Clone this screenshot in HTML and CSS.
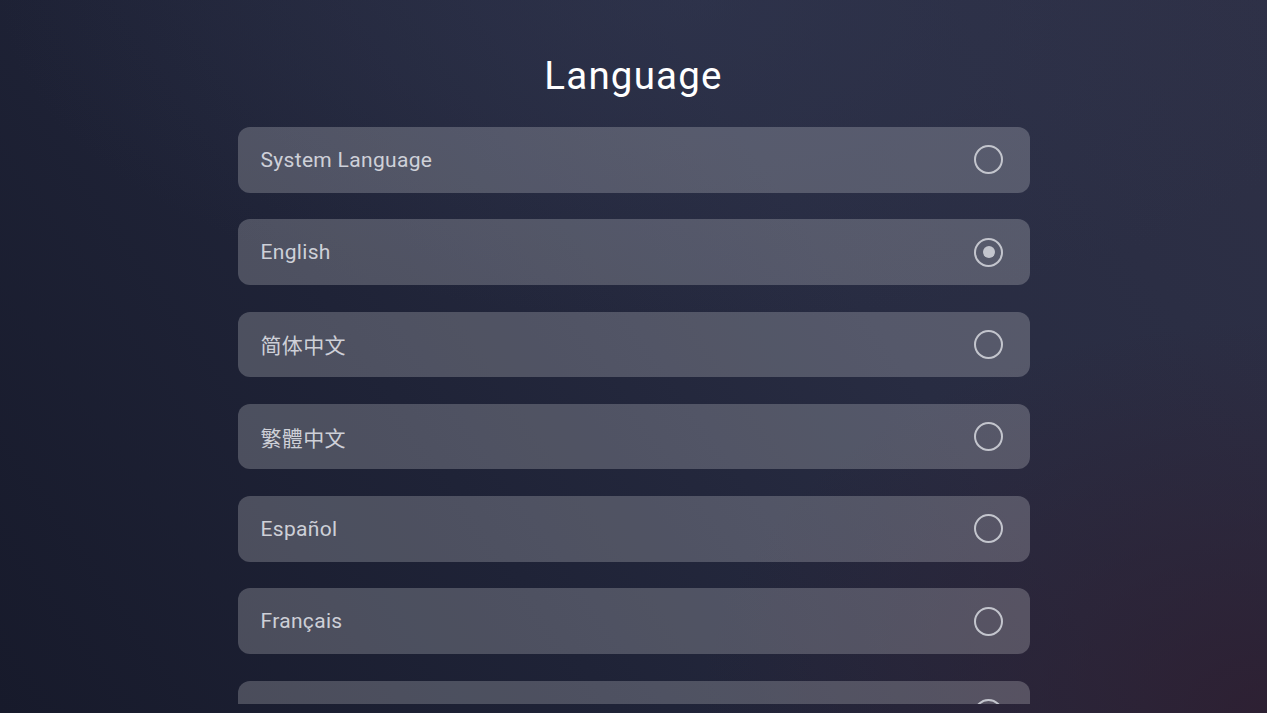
FILE: index.html
```html
<!DOCTYPE html>
<html lang="en">
<head>
<meta charset="utf-8">
<title>Language</title>
<link rel="stylesheet" href="styles.css">
</head>
<body>
<main class="screen">
  <h1 class="title">Language</h1>
  <ul class="lang-list">
    <li class="lang-item"><span class="lang-name">System Language</span><span class="radio"></span></li>
    <li class="lang-item"><span class="lang-name">English</span><span class="radio radio-on"></span></li>
    <li class="lang-item"><span class="lang-name">简体中文</span><span class="radio"></span></li>
    <li class="lang-item"><span class="lang-name">繁體中文</span><span class="radio"></span></li>
    <li class="lang-item"><span class="lang-name">Español</span><span class="radio"></span></li>
    <li class="lang-item"><span class="lang-name">Français</span><span class="radio"></span></li>
    <li class="lang-item"><span class="lang-name">Deutsch</span><span class="radio"></span></li>
    <li class="lang-item"><span class="lang-name">日本語</span><span class="radio"></span></li>
  </ul>
</main>
</body>
</html>
```

FILE: styles.css
```css
html, body {
  margin: 0;
  padding: 0;
  height: 100%;
  overflow: hidden;
}

body {
  font-family: Roboto, "Noto Sans CJK SC", "Noto Sans CJK TC", sans-serif;
  background:
    radial-gradient(ellipse 45% 55% at 100% 100%, rgba(46, 30, 48, 0.85), rgba(46, 30, 48, 0) 100%),
    radial-gradient(ellipse 55% 45% at 55% 0%, rgba(50, 56, 82, 0.5), rgba(50, 56, 82, 0) 100%),
    linear-gradient(55deg, #171a2b 0%, #1f2337 35%, #282c42 65%, #2e3046 100%);
  color: #fff;
}

.screen {
  height: 100%;
  display: flex;
  flex-direction: column;
  align-items: center;
  box-sizing: border-box;
  padding-bottom: 9px;
}

.title {
  margin: 52px 0 0;
  height: 75px;
  font-size: 38.5px;
  font-weight: 400;
  line-height: 48px;
  letter-spacing: 1.2px;
  color: #ffffff;
}

.lang-list {
  list-style: none;
  margin: 0;
  padding: 0;
  width: 792px;
  flex: 1;
  min-height: 0;
  overflow: hidden;
  display: flex;
  flex-direction: column;
  gap: 26.7px;
}

.lang-item {
  flex: none;
  height: 65.6px;
  box-sizing: border-box;
  padding: 0 26.5px 0 23px;
  border-radius: 12px;
  background: rgba(255, 255, 255, 0.21);
  display: flex;
  align-items: center;
  justify-content: space-between;
}

.lang-name {
  font-size: 21px;
  color: rgba(236, 238, 244, 0.82);
  letter-spacing: 0.32px;
}

.radio {
  width: 29px;
  height: 29px;
  box-sizing: border-box;
  border: 2.5px solid #c3c5cd;
  border-radius: 50%;
  display: flex;
  align-items: center;
  justify-content: center;
}

.radio-on::after {
  content: "";
  width: 12px;
  height: 12px;
  border-radius: 50%;
  background: #c3c5cd;
}
```
